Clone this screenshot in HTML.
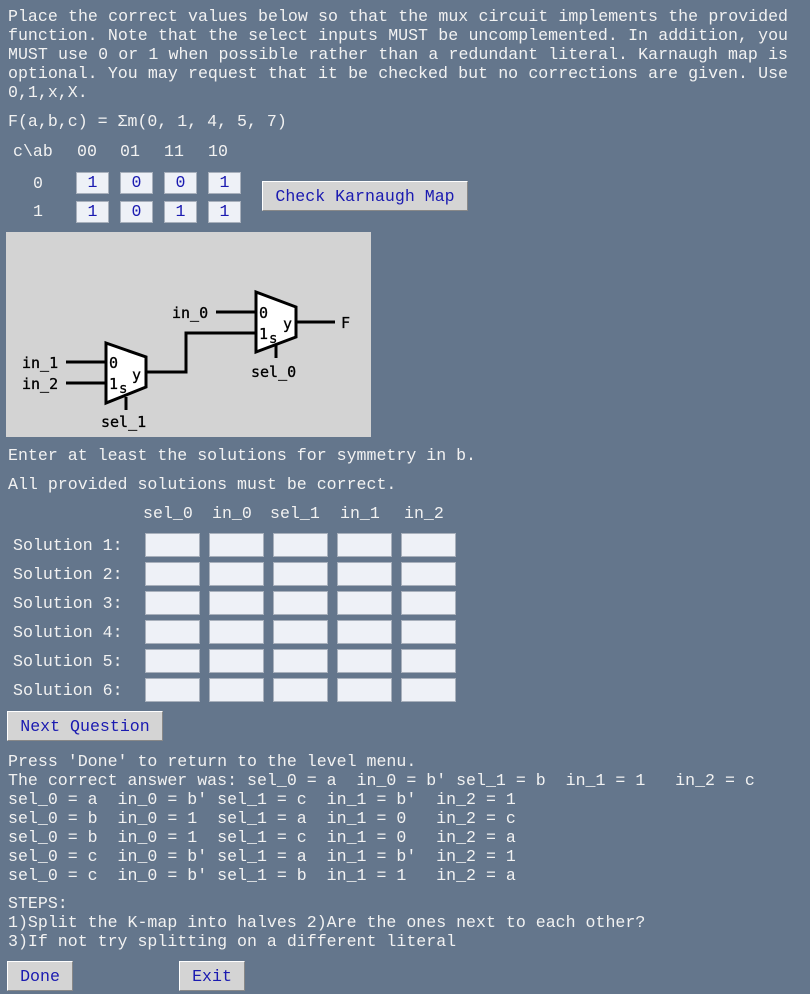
<!DOCTYPE html>
<html><head><meta charset="utf-8"><style>
body{margin:0;width:810px;height:994px;background:#64768c;overflow:hidden;position:relative;font-family:"Liberation Mono","DejaVu Sans Mono",monospace;font-size:16.6px;color:#f2f2f2;}
.t{position:absolute;line-height:19px;white-space:pre;}
.j{position:absolute;left:8px;width:780px;line-height:19px;text-align:justify;text-align-last:justify;white-space:normal;}
.k{position:absolute;width:31px;height:20px;background:#eef1f7;border:1px solid #a8b0bc;color:#1a1ab0;text-align:center;line-height:20px;}
.in{position:absolute;width:53px;height:22px;background:#eef1f7;border:1px solid #a8b0bc;}
.b{position:absolute;height:30px;background:#d4d4d4;border-top:1px solid #fff;border-left:1px solid #fff;border-right:1px solid #888;border-bottom:1px solid #888;color:#1a1ab0;line-height:30px;text-align:center;box-sizing:border-box;}
</style></head><body>
<div class="j" style="top:7px">Place the correct values below so that the mux circuit implements the provided</div>
<div class="j" style="top:26px">function. Note that the select inputs MUST be uncomplemented. In addition, you</div>
<div class="j" style="top:45px">MUST use 0 or 1 when possible rather than a redundant literal. Karnaugh map is</div>
<div class="j" style="top:64px">optional. You may request that it be checked but no corrections are given. Use</div>
<div class="t" style="left:8px;top:83px">0,1,x,X.</div>
<div class="t" style="left:8px;top:112px">F(a,b,c) = Σm(0, 1, 4, 5, 7)</div>
<div class="t" style="left:13px;top:142px">c\ab</div>
<div class="t" style="left:77px;top:142px">00</div><div class="t" style="left:120px;top:142px">01</div><div class="t" style="left:164px;top:142px">11</div><div class="t" style="left:208px;top:142px">10</div>
<div class="t" style="left:33px;top:174px">0</div>
<div class="t" style="left:33px;top:202px">1</div>
<div class="k" style="left:76px;top:172px">1</div><div class="k" style="left:120px;top:172px">0</div><div class="k" style="left:164px;top:172px">0</div><div class="k" style="left:208px;top:172px">1</div>
<div class="k" style="left:76px;top:201px">1</div><div class="k" style="left:120px;top:201px">0</div><div class="k" style="left:164px;top:201px">1</div><div class="k" style="left:208px;top:201px">1</div>
<div class="b" style="left:262px;top:181px;width:206px">Check Karnaugh Map</div>
<svg style="position:absolute;left:6px;top:232px" width="365" height="205" viewBox="6 232 365 205">
<rect x="6" y="232" width="365" height="205" fill="#d3d3d3"/>
<g stroke="#000" stroke-width="3" fill="none">
<polygon points="106,343 146,357 146,387 106,403" fill="#fff"/>
<polygon points="256,292 296,307 296,337 256,352" fill="#fff"/>
<line x1="66" y1="362" x2="106" y2="362"/><line x1="66" y1="383" x2="106" y2="383"/>
<line x1="126" y1="397" x2="126" y2="410"/>
<polyline points="147,372 186,372 186,333 256,333"/>
<line x1="216" y1="312" x2="256" y2="312"/>
<line x1="296" y1="322" x2="335" y2="322"/>
<line x1="276" y1="345" x2="276" y2="358"/>
</g>
<g font-family="DejaVu Sans Mono,monospace" font-size="15" fill="#000" stroke="#000" stroke-width="0.3">
<text x="22" y="368">in_1</text><text x="22" y="389">in_2</text>
<text x="109" y="368">0</text><text x="109" y="389">1</text><text x="119" y="393" font-size="14">s</text><text x="132" y="380">y</text>
<text x="101" y="427">sel_1</text>
<text x="172" y="318">in_0</text>
<text x="259" y="318">0</text><text x="259" y="339">1</text><text x="269" y="343" font-size="14">s</text><text x="283" y="329">y</text>
<text x="341" y="328">F</text>
<text x="251" y="377">sel_0</text>
</g></svg>
<div class="t" style="left:8px;top:446px">Enter at least the solutions for symmetry in b.</div>
<div class="t" style="left:8px;top:475px">All provided solutions must be correct.</div>
<div class="t" style="left:143px;top:504px">sel_0</div><div class="t" style="left:212px;top:504px">in_0</div><div class="t" style="left:270px;top:504px">sel_1</div><div class="t" style="left:340px;top:504px">in_1</div><div class="t" style="left:404px;top:504px">in_2</div>
<div class="t" style="left:13px;top:536px">Solution 1:</div>
<div class="t" style="left:13px;top:565px">Solution 2:</div>
<div class="t" style="left:13px;top:594px">Solution 3:</div>
<div class="t" style="left:13px;top:623px">Solution 4:</div>
<div class="t" style="left:13px;top:652px">Solution 5:</div>
<div class="t" style="left:13px;top:681px">Solution 6:</div>
<div class="in" style="left:145px;top:533px"></div><div class="in" style="left:209px;top:533px"></div><div class="in" style="left:273px;top:533px"></div><div class="in" style="left:337px;top:533px"></div><div class="in" style="left:401px;top:533px"></div>
<div class="in" style="left:145px;top:562px"></div><div class="in" style="left:209px;top:562px"></div><div class="in" style="left:273px;top:562px"></div><div class="in" style="left:337px;top:562px"></div><div class="in" style="left:401px;top:562px"></div>
<div class="in" style="left:145px;top:591px"></div><div class="in" style="left:209px;top:591px"></div><div class="in" style="left:273px;top:591px"></div><div class="in" style="left:337px;top:591px"></div><div class="in" style="left:401px;top:591px"></div>
<div class="in" style="left:145px;top:620px"></div><div class="in" style="left:209px;top:620px"></div><div class="in" style="left:273px;top:620px"></div><div class="in" style="left:337px;top:620px"></div><div class="in" style="left:401px;top:620px"></div>
<div class="in" style="left:145px;top:649px"></div><div class="in" style="left:209px;top:649px"></div><div class="in" style="left:273px;top:649px"></div><div class="in" style="left:337px;top:649px"></div><div class="in" style="left:401px;top:649px"></div>
<div class="in" style="left:145px;top:678px"></div><div class="in" style="left:209px;top:678px"></div><div class="in" style="left:273px;top:678px"></div><div class="in" style="left:337px;top:678px"></div><div class="in" style="left:401px;top:678px"></div>
<div class="b" style="left:7px;top:711px;width:156px">Next Question</div>
<div class="t" style="left:8px;top:752px">Press 'Done' to return to the level menu.
The correct answer was: sel_0 = a  in_0 = b' sel_1 = b  in_1 = 1   in_2 = c
sel_0 = a  in_0 = b' sel_1 = c  in_1 = b'  in_2 = 1
sel_0 = b  in_0 = 1  sel_1 = a  in_1 = 0   in_2 = c
sel_0 = b  in_0 = 1  sel_1 = c  in_1 = 0   in_2 = a
sel_0 = c  in_0 = b' sel_1 = a  in_1 = b'  in_2 = 1
sel_0 = c  in_0 = b' sel_1 = b  in_1 = 1   in_2 = a</div>
<div class="t" style="left:8px;top:894px">STEPS:
1)Split the K-map into halves 2)Are the ones next to each other?
3)If not try splitting on a different literal</div>
<div class="b" style="left:7px;top:961px;width:66px">Done</div>
<div class="b" style="left:179px;top:961px;width:66px">Exit</div>
</body></html>
